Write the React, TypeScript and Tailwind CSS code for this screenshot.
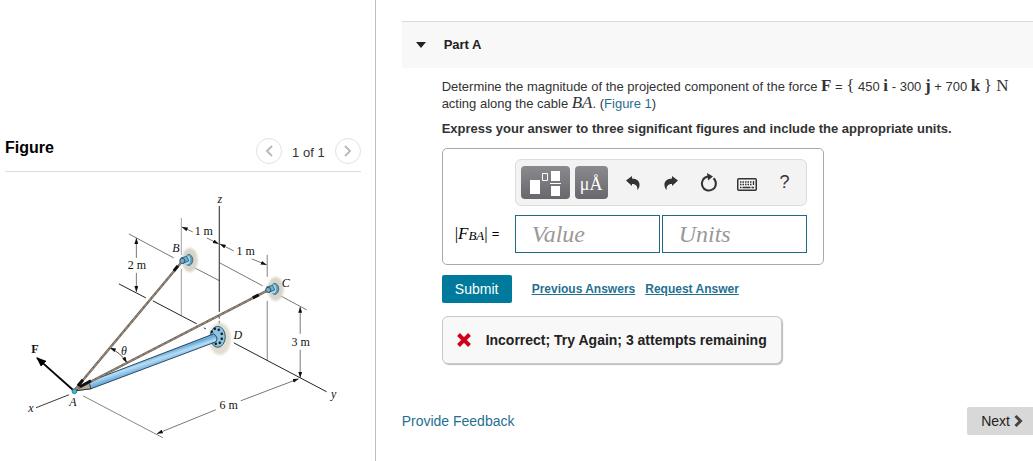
import React from "react";

const LABELS = [
  { text: "1 m", x: 204, y: 234 },
  { text: "1 m", x: 246, y: 254 },
  { text: "2 m", x: 137, y: 268 },
  { text: "3 m", x: 301, y: 345 },
  { text: "6 m", x: 229, y: 408 },
];

const POINTS = [
  { text: "z", x: 220, y: 202 },
  { text: "B", x: 176, y: 251 },
  { text: "C", x: 286, y: 286 },
  { text: "D", x: 238, y: 338 },
  { text: "A", x: 73, y: 405 },
  { text: "x", x: 31, y: 411 },
  { text: "y", x: 334, y: 397 },
  { text: "θ", x: 124, y: 354 },
];

// Bolt heads around the flange at D
const BOLTS = [
  [215, 328], [219, 329], [222, 333], [222, 338], [220, 342], [216, 343], [213, 341], [212, 331],
];

function Anchor({ x, y }: { x: number; y: number }) {
  return (
    <g>
      <ellipse cx={x + 5} cy={y} rx="8" ry="12" fill="#d9d4c8" filter="url(#soft)" />
      <ellipse cx={x + 4} cy={y} rx="4" ry="5.500" fill="#5f9dbb" stroke="#27566f" strokeWidth="0.7" />
      <ellipse cx={x + 2} cy={y} rx="3.500" ry="4.500" fill="#a9dcf3" />
      <path d={`M${x - 4} ${y - 2}l6-1.5 2 4.5-6 2.5z`} fill="#6fb3d2" stroke="#234a5c" strokeWidth="0.8" />
      <circle cx={x - 2.5} cy={y + 1} r="2.600" fill="#76abc4" stroke="#234a5c" strokeWidth="0.9" />
    </g>
  );
}

function ForceDiagram() {
  return (
    <svg viewBox="0 171 375 280" className="block w-full" role="img" aria-label="Figure 1">
      <defs>
        <marker id="dim" viewBox="0 0 6 4" refX="6" refY="2" markerWidth="6" markerHeight="4" markerUnits="userSpaceOnUse" orient="auto-start-reverse">
          <path d="M0 0L6 2 0 4z" fill="#111" />
        </marker>
        <marker id="force" viewBox="0 0 10 8" refX="9" refY="4" markerWidth="10" markerHeight="8" markerUnits="userSpaceOnUse" orient="auto">
          <path d="M0 0L10 4 0 8z" fill="#000" />
        </marker>
        <filter id="soft" x="-30%" y="-30%" width="160%" height="160%">
          <feGaussianBlur stdDeviation="1" />
        </filter>
        <linearGradient id="rod" gradientUnits="userSpaceOnUse" x1="150" y1="357" x2="153" y2="366">
          <stop offset="0" stopColor="#6fadd9" />
          <stop offset="0.4" stopColor="#b5ddf7" />
          <stop offset="1" stopColor="#6aa9da" />
        </linearGradient>
      </defs>

      {/* construction lines */}
      <g stroke="#8a8a8a" strokeWidth="0.8" fill="none">
        <path d="M181.500 217V254M181.500 268V315" />
        <path d="M267.500 254V276M267.500 300V360" stroke="#666" />
        <path d="M129 233L174 257M193 266L220 280M220 262L263 285M279 294L307 309" stroke="#555" />
        <path d="M83 395L163 437" stroke="#666" />
      </g>

      {/* axes */}
      <g stroke="#222" fill="none">
        <path d="M219.500 205V311" />
        <path d="M219.500 314V324" strokeDasharray="4 2" stroke="#555" />
        <path d="M119 283L146 297M153 300L197 323M204 327L206 328M234 342L327 391" />
        <path d="M69 394L36 407" strokeWidth="0.9" />
      </g>

      {/* dimensions */}
      <g stroke="#555" strokeWidth="0.8" fill="none">
        <path d="M193 231L182 226" markerEnd="url(#dim)" />
        <path d="M207 237L219 243" markerEnd="url(#dim)" />
        <path d="M234 250L220 243" markerEnd="url(#dim)" />
        <path d="M252 258L267 264" markerEnd="url(#dim)" />
        <path d="M136.500 257V237" markerEnd="url(#dim)" />
        <path d="M136.500 272V291" markerEnd="url(#dim)" />
        <path d="M300.500 333V306" markerEnd="url(#dim)" />
        <path d="M300.500 349V377" markerEnd="url(#dim)" />
        <path d="M216 409L157 433" markerEnd="url(#dim)" />
        <path d="M241 400L299 378" markerEnd="url(#dim)" />
        <path d="M110 347Q121 352 127 362" stroke="#222" markerStart="url(#dim)" markerEnd="url(#dim)" />
      </g>

      {/* flange and rod */}
      <ellipse cx="220" cy="338" rx="11" ry="16" fill="#e2ddcf" filter="url(#soft)" />
      <ellipse cx="218" cy="336" rx="7.500" ry="10.500" fill="#8fc3df" stroke="#2b5c78" />
      {BOLTS.map(([cx, cy]) => (
        <circle key={`${cx}-${cy}`} cx={cx} cy={cy} r="1.300" fill="#10202b" />
      ))}
      <path d="M75 390L89 381 214 333Q219 337 216 341L91 388z" fill="url(#rod)" stroke="#1c3b50" strokeWidth="0.9" />
      <path d="M75 390L89 381 91 388z" fill="#b8a894" stroke="#222" strokeWidth="0.8" />

      {/* cables */}
      <g fill="none">
        <path d="M75 389L181 262M75 389L267 290" stroke="#6a5f54" strokeWidth="2.400" />
        <path d="M75 389L181 262M75 389L267 290" stroke="#9a8d7d" strokeWidth="1.200" strokeDasharray="5 1" />
        <path d="M78 385L83 379M174 270L178 265M80 386L91 380M253 297L259 294" stroke="#111" strokeWidth="3" />
      </g>
      <Anchor x={185} y={259} />
      <Anchor x={271} y={288} />

      <path d="M74 390L37 357" stroke="#000" strokeWidth="1.800" markerEnd="url(#force)" />
      <circle cx="74.500" cy="390.500" r="2.400" fill="#45b7d2" stroke="#16667e" strokeWidth="0.8" />

      <g fill="#111" textAnchor="middle" fontFamily="'Liberation Serif', serif">
        {LABELS.map((l) => (
          <text key={`${l.x}-${l.y}`} x={l.x} y={l.y} fontSize="12">{l.text}</text>
        ))}
        {POINTS.map((p) => (
          <text key={p.text} x={p.x} y={p.y} fontSize="12" fontStyle="italic">{p.text}</text>
        ))}
        <text x="35" y="352" fontSize="12" fontWeight="bold">F</text>
      </g>
    </svg>
  );
}

function Chevron({ left = false }: { left?: boolean }) {
  return (
    <svg viewBox="0 0 12 14" className="h-3.5 w-3" fill="none" stroke="currentColor" strokeWidth="2">
      <path d={left ? "M9 2L4 7l5 5" : "M3 2l5 5-5 5"} />
    </svg>
  );
}

function CurvedArrow({ forward = false }: { forward?: boolean }) {
  return (
    <svg viewBox="0 0 14 14" className="h-3.5 w-3.5" fill="currentColor">
      <path
        transform={forward ? "translate(14 0) scale(-1 1)" : undefined}
        d="M0 4.500L6 0v2.500C11 2.500 14 5.500 13.500 9.500 13.300 11.500 12.300 13 11.300 14c.4-3.500-.8-6-5.300-6V10z"
      />
    </svg>
  );
}

function Toolbar() {
  const dark = "flex h-[33px] shrink-0 items-center justify-center rounded-[4px] bg-linear-to-b from-[#8b8a8f] to-[#68676b] text-white";
  const plain = "flex h-[33px] w-[38px] shrink-0 items-center justify-center text-[#333]";
  return (
    <div className="flex h-[47px] items-center rounded-md border border-[#dcdcdc] bg-[#f3f3f3] pl-[5px]">
      <button type="button" aria-label="Templates" className={`${dark} w-[49px]`}>
        <svg viewBox="0 0 32 26" className="h-[26px] w-8">
          <path d="M1 10h10v14H1zM22 1h9v10h-9zM22 16h9v10h-9zM21 13h11v1H21z" fill="#fff" />
          <path d="M13.500 3.500h5v7h-5z" fill="none" stroke="#fff" />
        </svg>
      </button>
      <button type="button" aria-label="Symbols" className={`${dark} ml-[5px] mr-1.5 w-[33px] pt-0.5 font-['Liberation_Serif',serif] text-[18px] leading-5`}>
        μÅ
      </button>
      <button type="button" aria-label="Undo" className={plain}><CurvedArrow /></button>
      <button type="button" aria-label="Redo" className={plain}><CurvedArrow forward /></button>
      <button type="button" aria-label="Reset" className={plain}>
        <svg viewBox="0 0 18 20" className="h-5 w-[18px]" fill="none" stroke="currentColor" strokeWidth="2">
          <path d="M13.500 5.300A7 7 0 1 1 8 3.600" />
          <path d="M7 0l6 3.500-5 4z" fill="currentColor" stroke="none" />
        </svg>
      </button>
      <button type="button" aria-label="Keyboard" className={plain}>
        <svg viewBox="0 0 20 13" className="mt-1 h-[13px] w-5" fill="none" stroke="currentColor">
          <rect x="0.750" y="0.750" width="18.500" height="11.500" rx="1" strokeWidth="1.500" />
          <path d="M3 4h12M3 6.500h12" strokeDasharray="1.500 1" strokeWidth="1.300" />
          <path d="M3 9.500h1.500M5.500 9.500h8M14.500 9.500H17M16.500 3v4" strokeWidth="1.300" />
        </svg>
      </button>
      <button type="button" aria-label="Help" className={`${plain} text-[18px]`}>?</button>
    </div>
  );
}

export default function App() {
  const field =
    "h-[38px] min-w-0 flex-1 border border-[#1d6a86] bg-white px-4 font-['Liberation_Serif',serif] text-[24px] italic placeholder:text-[#999] outline-none";
  const math = "font-['Liberation_Serif',serif] text-[17px] leading-0";

  return (
    <div className="grid min-h-screen grid-cols-[4fr_7fr] bg-white font-['Liberation_Sans',sans-serif] text-[13px] text-[#333]">
      <aside className="border-r border-[#b4bfcb] pt-[138px]">
        <div className="ml-[5px] mr-3.5 flex h-[34px] items-start border-b border-[#dcdcdc]">
          <h2 className="text-[16px] leading-5 font-bold text-black">Figure</h2>
          <div className="ml-auto flex items-center">
            <button type="button" aria-label="Previous figure" className="flex size-[26px] items-center justify-center rounded-full border border-[#e2e2e2] text-[#bbb]">
              <Chevron left />
            </button>
            <span className="px-2.5 pt-1 leading-5">1 of 1</span>
            <button type="button" aria-label="Next figure" className="flex size-[26px] items-center justify-center rounded-full border border-[#e2e2e2] text-[#bbb]">
              <Chevron />
            </button>
          </div>
        </div>
        <ForceDiagram />
      </aside>

      <main className="min-w-0 pt-[21px] pl-[26px]">
        <button type="button" className="flex h-[47px] w-full items-center border-t border-[#dcdcdc] bg-[#f8f8f8] pl-3.5 font-bold text-[#222]">
          <svg viewBox="0 0 10 6" className="mr-[18px] h-1.5 w-2.5" fill="currentColor">
            <path d="M0 0h10L5 6z" />
          </svg>
          Part A
        </button>

        <div className="pl-10">
          <p className="pt-2.5 leading-[17px]">
            Determine the magnitude of the projected component of the force <b className={math}>F</b> ={" "}
            <span className={math}>{"{"}</span> 450 <b className={math}>i</b> - 300 <b className={math}>j</b> + 700{" "}
            <b className={math}>k</b> <span className={math}>{"}"} N</span>
            <br />
            acting along the cable <i className={math}>BA</i>. (
            <a href="#figure-1" className="text-[#1f7192]">Figure 1</a>)
          </p>
          <p className="mt-2 leading-[18px] font-bold">
            Express your answer to three significant figures and include the appropriate units.
          </p>

          <form>
            <div className="mt-2.5 flex w-[382px] max-w-full items-end rounded-[5px] border border-[#a9a9a9] pt-2.5 pr-4 pb-[11px] pl-3">
              <label htmlFor="value" className="flex h-[38px] w-[60px] shrink-0 items-center font-['Liberation_Serif',serif] text-[17px] text-black">
                <span>|<i>F</i></span>
                <i className="pt-1 text-[13px]">BA</i>
                <span>|</span>
                <span className="ml-1 font-['Liberation_Sans',sans-serif] text-[13px]">=</span>
              </label>
              <div className="flex min-w-0 flex-1 flex-col gap-[9px]">
                <Toolbar />
                <div className="flex gap-0.5">
                  <input id="value" placeholder="Value" className={field} />
                  <input aria-label="Units" placeholder="Units" className={field} />
                </div>
              </div>
            </div>

            <div className="mt-2.5 flex items-center text-[12px] font-bold text-[#1f7192]">
              <button type="button" className="mr-5 h-7 w-[70px] rounded-xs bg-[#007a9c] text-[14px] font-normal text-white">
                Submit
              </button>
              <a href="#previous" className="mr-2.5 underline">Previous Answers</a>
              <a href="#request" className="underline">Request Answer</a>
            </div>
          </form>

          <div role="status" className="mt-[13px] flex h-12 w-fit items-center rounded-md border border-[#c8c8c8] bg-[#f8f8f8] px-3.5 text-[14px] font-bold text-[#222] shadow-[1px_1px_1px_#bbb]">
            <svg viewBox="0 0 14 14" className="mr-[15px] size-3.5 text-[#d0021b]" fill="none" stroke="currentColor" strokeWidth="4">
              <path d="M1.500 1.500l11 11M12.500 1.500l-11 11" />
            </svg>
            Incorrect; Try Again; 3 attempts remaining
          </div>
        </div>

        <div className="mt-[43px] flex items-center justify-between text-[14px]">
          <a href="#feedback" className="text-[#1f7192]">Provide Feedback</a>
          <button type="button" className="flex h-7 items-center gap-1 rounded-l-xs bg-[#d8d8d8] pr-2.5 pl-3.5 text-[#222]">
            Next
            <svg viewBox="0 0 9 12" className="h-3 w-[9px] text-[#444]" fill="none" stroke="currentColor" strokeWidth="3">
              <path d="M1.500 1l5 5-5 5" />
            </svg>
          </button>
        </div>
      </main>
    </div>
  );
}
